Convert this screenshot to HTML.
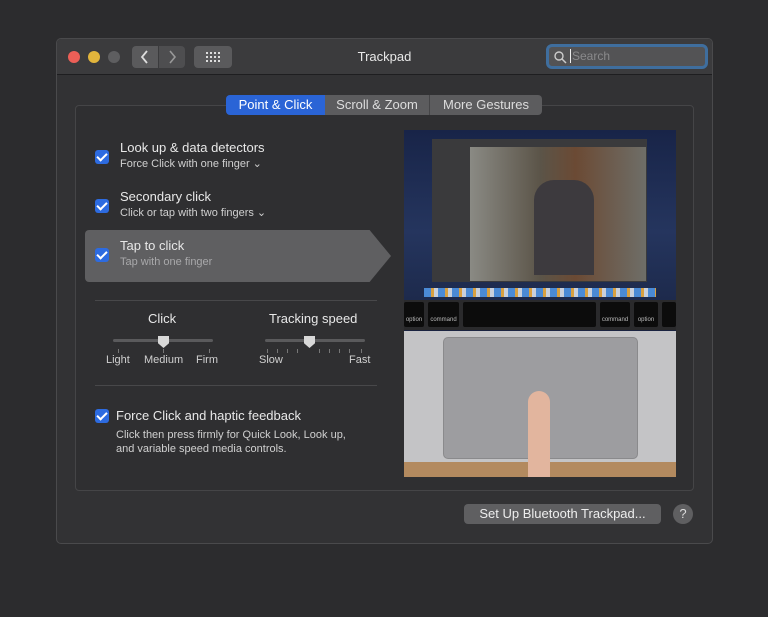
<!DOCTYPE html>
<html><head><meta charset="utf-8"><style>
*{margin:0;padding:0;box-sizing:border-box}
body{width:768px;height:617px;background:#2c2c2e;font-family:"Liberation Sans",sans-serif;position:relative;overflow:hidden;color:#e6e6e6}
.win{position:absolute;left:56px;top:38px;width:657px;height:506px;background:#323234;border:1px solid #4a4a4c;border-radius:5px;overflow:hidden}
.tb{position:absolute;left:0;top:0;width:100%;height:36px;background:#3b3b3d;border-bottom:1px solid #1e1e20}
.dot{position:absolute;top:12px;width:12px;height:12px;border-radius:50%}
.btn{position:absolute;background:#5a5a5c;border-radius:4px}
.panel{position:absolute;left:18px;top:66px;width:619px;height:386px;border:1px solid #454547;border-radius:4px;background:#2f2f31}
.cb{position:absolute;width:14px;height:14px;background:#2d6be0;border-radius:3px}
.cb:after{content:"";position:absolute;left:4px;top:1px;width:4px;height:8px;border:solid #fff;border-width:0 2px 2px 0;transform:rotate(45deg)}
.t{position:absolute;font-size:13px;color:#e8e8e8;white-space:nowrap}
.s{position:absolute;font-size:11px;color:#d0d0d0;white-space:nowrap}
.hr{position:absolute;height:1px;background:#48484a}
.track{position:absolute;height:3px;background:#5a5a5c;border-radius:2px}
.knob{position:absolute;width:11px;height:12px;background:#d8d8d8;clip-path:polygon(0 0,100% 0,100% 60%,50% 100%,0 60%)}
.tick{position:absolute;width:1px;height:4px;background:#777}
.key{position:absolute;top:172px;height:25px;background:#0c0c0c;border-radius:2px;font-size:6px;color:#bbb;text-align:center;padding-top:15px}
</style></head><body>
<div class="win">
 <div class="tb">
  <div class="dot" style="left:11px;background:#ec5f57"></div>
  <div class="dot" style="left:31px;background:#e2b53c"></div>
  <div class="dot" style="left:51px;background:#5e5e60"></div>
  <div class="btn" style="left:75px;top:7px;width:26px;height:22px;border-radius:4px 0 0 4px"></div>
  <div class="btn" style="left:102px;top:7px;width:26px;height:22px;background:#4e4e50;border-radius:0 4px 4px 0"></div>
  <svg style="position:absolute;left:82px;top:11px" width="12" height="14"><path d="M8 1L3 7l5 6" stroke="#ddd" stroke-width="1.8" fill="none"/></svg>
  <svg style="position:absolute;left:109px;top:11px" width="12" height="14"><path d="M4 1l5 6-5 6" stroke="#999" stroke-width="1.6" fill="none"/></svg>
  <div class="btn" style="left:137px;top:7px;width:38px;height:22px"></div>
  <svg style="position:absolute;left:149px;top:13px" width="14" height="10"><g fill="#ddd"><rect x="0" y="0" width="2" height="2"/><rect x="4" y="0" width="2" height="2"/><rect x="8" y="0" width="2" height="2"/><rect x="12" y="0" width="2" height="2"/><rect x="0" y="4" width="2" height="2"/><rect x="4" y="4" width="2" height="2"/><rect x="8" y="4" width="2" height="2"/><rect x="12" y="4" width="2" height="2"/><rect x="0" y="8" width="2" height="2"/><rect x="4" y="8" width="2" height="2"/><rect x="8" y="8" width="2" height="2"/><rect x="12" y="8" width="2" height="2"/></g></svg>
  <div style="position:absolute;left:0;width:100%;top:10px;text-align:center;font-size:13px;color:#e8e8e8">Trackpad</div>
  <div style="position:absolute;left:489px;top:5px;width:162px;height:25px;border:3px solid #3f6e9e;border-radius:6px;background:#535355"></div>
  <svg style="position:absolute;left:497px;top:12px" width="13" height="13"><circle cx="5" cy="5" r="4" stroke="#ccc" stroke-width="1.4" fill="none"/><path d="M8 8l4 4" stroke="#ccc" stroke-width="1.5"/></svg>
  <div style="position:absolute;left:513px;top:10px;width:1px;height:14px;background:#eee"></div>
  <div style="position:absolute;left:515px;top:10px;font-size:12px;color:#8a8a8c">Search</div>
 </div>
 <div class="panel"></div>
 <div style="position:absolute;left:169px;top:56px;height:20px;display:flex;font-size:13px;border-radius:4px;overflow:hidden">
  <div style="background:#2a64d6;color:#fff;width:99px;text-align:center;line-height:20px">Point &amp; Click</div>
  <div style="background:#5c5c5e;color:#ddd;width:105px;text-align:center;line-height:20px;border-right:1px solid #454547">Scroll &amp; Zoom</div>
  <div style="background:#5c5c5e;color:#ddd;width:112px;text-align:center;line-height:20px">More Gestures</div>
 </div>
 <div class="cb" style="left:38px;top:111px"></div>
 <div class="t" style="left:63px;top:101px">Look up &amp; data detectors</div>
 <div class="s" style="left:63px;top:118px">Force Click with one finger ⌄</div>
 <div class="cb" style="left:38px;top:160px"></div>
 <div class="t" style="left:63px;top:150px">Secondary click</div>
 <div class="s" style="left:63px;top:167px">Click or tap with two fingers ⌄</div>
 <div style="position:absolute;left:28px;top:191px;width:306px;height:52px;background:#5f5f61;clip-path:polygon(0 0,93% 0,100% 50%,93% 100%,0 100%);border-radius:4px"></div>
 <div class="cb" style="left:38px;top:209px"></div>
 <div class="t" style="left:63px;top:199px">Tap to click</div>
 <div class="s" style="left:63px;top:217px;color:#a8a8aa">Tap with one finger</div>
 <div class="hr" style="left:38px;top:261px;width:282px"></div>
 <div class="t" style="left:91px;top:272px">Click</div>
 <div class="track" style="left:56px;top:300px;width:100px"></div>
 <div class="knob" style="left:101px;top:297px"></div>
 <div class="tick" style="left:61px;top:310px"></div><div class="tick" style="left:106px;top:310px"></div><div class="tick" style="left:152px;top:310px"></div>
 <div class="s" style="left:49px;top:315px">Light</div>
 <div class="s" style="left:87px;top:315px">Medium</div>
 <div class="s" style="left:139px;top:315px">Firm</div>
 <div class="t" style="left:212px;top:272px">Tracking speed</div>
 <div class="track" style="left:208px;top:300px;width:100px"></div>
 <div class="knob" style="left:247px;top:297px"></div>
 <div class="tick" style="left:210px;top:310px"></div><div class="tick" style="left:220px;top:310px"></div><div class="tick" style="left:230px;top:310px"></div><div class="tick" style="left:240px;top:310px"></div><div class="tick" style="left:262px;top:310px"></div><div class="tick" style="left:272px;top:310px"></div><div class="tick" style="left:282px;top:310px"></div><div class="tick" style="left:292px;top:310px"></div><div class="tick" style="left:304px;top:310px"></div>
 <div class="s" style="left:202px;top:315px">Slow</div>
 <div class="s" style="left:292px;top:315px">Fast</div>
 <div class="hr" style="left:38px;top:346px;width:282px"></div>
 <div class="cb" style="left:38px;top:370px"></div>
 <div class="t" style="left:59px;top:369px">Force Click and haptic feedback</div>
 <div class="s" style="left:59px;top:389px;line-height:14px">Click then press firmly for Quick Look, Look up,<br>and variable speed media controls.</div>
 <div style="position:absolute;left:347px;top:91px;width:272px;height:347px;background:#1a2340;overflow:hidden">
  <div style="position:absolute;left:0;top:0;width:100%;height:170px;background:linear-gradient(180deg,#182448,#25355e 60%,#1d2a4c)"></div>
  <div style="position:absolute;left:28px;top:9px;width:215px;height:143px;background:#3a3a3c"></div>
  <div style="position:absolute;left:66px;top:17px;width:176px;height:134px;background:linear-gradient(90deg,#8a8a84,#5b5448 40%,#6b4a34 60%,#6e6e68);"></div>
  <div style="position:absolute;left:130px;top:50px;width:60px;height:95px;background:#3d3a3e;border-radius:20px 20px 0 0"></div>
  <div style="position:absolute;left:20px;top:158px;width:232px;height:9px;background:repeating-linear-gradient(90deg,#4a8ad6 0 7px,#d9a040 7px 10px,#c9d0dc 10px 14px)"></div>
  <div style="position:absolute;left:0;top:170px;width:100%;height:30px;background:#2a2a2c"></div>
  <div class="key" style="left:0;width:20px">option</div>
  <div class="key" style="left:24px;width:31px">command</div>
  <div class="key" style="left:59px;width:133px"></div>
  <div class="key" style="left:196px;width:30px">command</div>
  <div class="key" style="left:230px;width:24px">option</div>
  <div class="key" style="left:258px;width:14px"></div>
  <div style="position:absolute;left:0;top:201px;width:100%;height:146px;background:#c4c4c6"></div>
  <div style="position:absolute;left:39px;top:207px;width:195px;height:122px;background:#9d9da0;border-radius:5px;border:1px solid #8a8a8c"></div>
  <div style="position:absolute;left:0;top:332px;width:100%;height:15px;background:#b38a5f"></div>
  <div style="position:absolute;left:124px;top:261px;width:22px;height:86px;background:#e2b59e;border-radius:11px 11px 0 0"></div>
 </div>
 <div style="position:absolute;left:407px;top:465px;width:197px;height:20px;background:#5f5f61;border-radius:4px;text-align:center;line-height:20px;font-size:13px;color:#eee">Set Up Bluetooth Trackpad...</div>
 <div style="position:absolute;left:616px;top:465px;width:20px;height:20px;border-radius:50%;background:#5f5f61;text-align:center;line-height:20px;font-size:13px;color:#ddd">?</div>
</div>
</body></html>
